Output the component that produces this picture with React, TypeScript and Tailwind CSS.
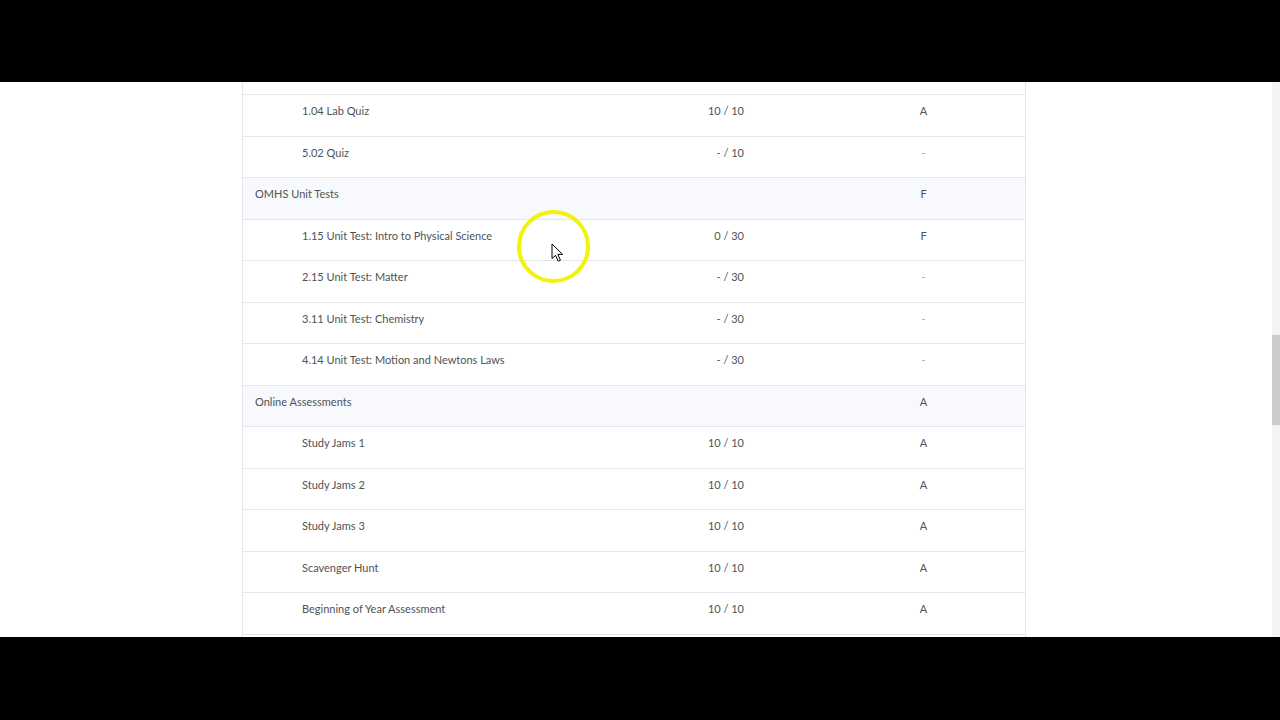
import React from "react";

type Row = { name: string; points?: string; grade: string; category?: boolean };

const rows: Row[] = [
  { name: "1.04 Lab Quiz", points: "10 / 10", grade: "A" },
  { name: "5.02 Quiz", points: "- / 10", grade: "-" },
  { name: "OMHS Unit Tests", grade: "F", category: true },
  { name: "1.15 Unit Test: Intro to Physical Science", points: "0 / 30", grade: "F" },
  { name: "2.15 Unit Test: Matter", points: "- / 30", grade: "-" },
  { name: "3.11 Unit Test: Chemistry", points: "- / 30", grade: "-" },
  { name: "4.14 Unit Test: Motion and Newtons Laws", points: "- / 30", grade: "-" },
  { name: "Online Assessments", grade: "A", category: true },
  { name: "Study Jams 1", points: "10 / 10", grade: "A" },
  { name: "Study Jams 2", points: "10 / 10", grade: "A" },
  { name: "Study Jams 3", points: "10 / 10", grade: "A" },
  { name: "Scavenger Hunt", points: "10 / 10", grade: "A" },
  { name: "Beginning of Year Assessment", points: "10 / 10", grade: "A" },
];

const GradeRow = ({ row }: { row: Row }) => (
  <div
    className={`flex h-[41.5px] border-b border-[#e3e6ea] pt-[9px] text-[11px] leading-[14px] text-[#4f5356] ${
      row.category ? "bg-[#f7f9fd]" : "bg-white"
    }`}
  >
    <div className={`w-[400px] ${row.category ? "pl-[12px]" : "pl-[59px]"}`}>{row.name}</div>
    <div className="w-[101px] text-right">{row.points ?? ""}</div>
    <div className={`ml-[78px] flex-1 text-center ${row.grade === "-" ? "text-[#a5a8ab]" : ""}`}>
      {row.grade}
    </div>
  </div>
);

export default function App() {
  return (
    <div className="flex h-screen w-full flex-col bg-black" style={{ fontFamily: "Lato, 'Open Sans', sans-serif" }}>
      <div className="h-[82px]" />
      <div className="relative flex-1 overflow-hidden bg-white">
        <div className="ml-[242px] h-full w-[784px] border-x border-[#e3e6ea]">
          {/* partial row cut off at top */}
          <div className="h-[13px] border-b border-[#e3e6ea]" />
          {rows.map((r) => (
            <GradeRow key={r.name} row={r} />
          ))}
        </div>

        {/* scrollbar */}
        <div className="absolute right-0 top-0 h-full w-[8px] bg-[#f4f4f4]">
          <div className="mt-[253px] h-[90px] w-full bg-[#cbcbcb]" />
        </div>

        {/* cursor highlight */}
        <div className="absolute left-[517px] top-[128px] h-[73px] w-[73px] rounded-full border-[4px] border-[#f2f20a]" />
        <svg className="absolute left-[551px] top-[161px]" width="13" height="20" viewBox="0 0 13 20">
          <path
            d="M1 1 L1 15.5 L4.6 12.3 L7.2 18.2 L9.4 17.2 L6.9 11.4 L11.6 11.4 Z"
            fill="#fff"
            stroke="#000"
            strokeWidth="1"
            strokeLinejoin="round"
          />
        </svg>
      </div>
      <div className="h-[83px]" />
    </div>
  );
}
